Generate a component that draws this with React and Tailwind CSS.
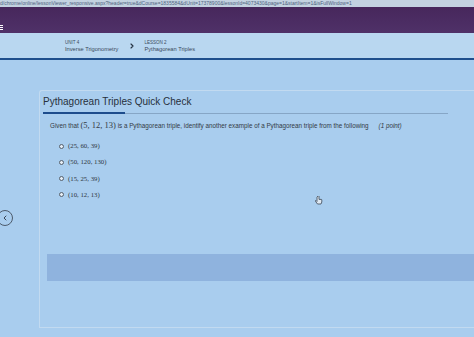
import { ChevronRight, ChevronLeft } from 'lucide-react';

const options = ['(25, 60, 39)', '(50, 120, 130)', '(15, 25, 39)', '(10, 12, 13)'];

function App() {
  return (
    <div className="relative h-[337px] w-[474px] overflow-hidden bg-[#a9cdee] font-['Liberation_Sans',Arial,sans-serif]">
      {/* address bar */}
      <div className="h-[7px] overflow-hidden whitespace-nowrap bg-[#c3d2e0] pl-0 text-[5px] leading-[6px] text-[#4f6480]">
        d/chrome/online/lessonViewer_responsive.aspx?header=true&amp;dCourse=1835584&amp;dUnit=17378900&amp;lessonId=4073430&amp;page=1&amp;startItem=1&amp;isFullWindow=1
      </div>

      {/* purple header */}
      <div className="flex h-[26px] items-end bg-gradient-to-b from-[#47275c] to-[#4f3168] pb-[3px]">
        <div className="flex w-[3px] flex-col gap-[1px]">
          <span className="h-[1px] bg-white" />
          <span className="h-[1px] bg-white" />
          <span className="h-[1px] bg-white" />
        </div>
      </div>

      {/* breadcrumb */}
      <div className="flex h-[25px] items-center bg-[#b9d7f0] pl-[65px] text-[#3a4a5c]">
        <div className="flex flex-col leading-[7px]">
          <span className="text-[4.5px] uppercase">Unit 4</span>
          <span className="text-[5.7px]">Inverse Trigonometry</span>
        </div>
        <ChevronRight className="ml-[10px] mr-[8px] h-[8px] w-[8px] text-[#263444]" strokeWidth={3.5} />
        <div className="flex flex-col leading-[7px]">
          <span className="text-[4.5px] uppercase">Lesson 2</span>
          <span className="text-[5.7px]">Pythagorean Triples</span>
        </div>
      </div>
      <div className="h-[2px] bg-[#1f4f8c]" />

      {/* body */}
      <div className="flex">
        <div className="w-[39px] shrink-0 pt-[150px]">
          <div className="-ml-[3px] flex h-[16px] w-[16px] items-center justify-center rounded-full border border-[#4d5b6c]">
            <ChevronLeft className="h-[8px] w-[8px] text-[#3a4656]" strokeWidth={3} />
          </div>
        </div>

        <div className="mt-[30px] h-[238px] flex-1 rounded-tl-[3px] border-l border-t border-b border-[#c2daf0]">
          <div className="pl-[3px] pr-[26px] pt-[4px]">
            <h1 className="text-[10px] leading-[13px] text-[#27303c]">Pythagorean Triples Quick Check</h1>
            <div className="mt-[4px] flex items-end">
              <span className="h-[2px] w-[82px] bg-[#1d4c8c]" />
              <span className="h-[1px] flex-1 bg-[#86a6c6]" />
            </div>
          </div>

          <p className="mt-[6px] whitespace-nowrap pl-[10px] text-[6.3px] leading-[10px] text-[#333a44]">
            Given that{' '}
            <span className="font-['Liberation_Serif',serif] text-[8.5px]">(5, 12, 13)</span>{' '}
            is a Pythagorean triple, identify another example of a Pythagorean triple from the following
            <span className="ml-[10px] italic">(1 point)</span>
          </p>

          <div className="mt-[10px] flex flex-col gap-[6.3px] pl-[19px]">
            {options.map((o) => (
              <div key={o} className="flex h-[10px] items-center gap-[4px]">
                <span className="h-[5px] w-[5px] rounded-full border border-[#55606c] bg-[#e6eef6]" />
                <span className="font-['Liberation_Serif',serif] text-[6.8px] text-[#2e3640]">{o}</span>
              </div>
            ))}
          </div>

          <div className="ml-[7px] mt-[54px] h-[27px] bg-[#8fb3de]" />
        </div>
      </div>

      {/* mouse cursor */}
      <svg className="absolute left-[315px] top-[196px]" width="8" height="9" viewBox="0 0 8 9">
        <path d="M2 1 v4.5 l-1 -1 q-0.8 0 -0.5 0.8 l2 2.7 h3.5 l0.8 -2 v-2 q0 -0.7 -0.7 -0.6 l-2.1 0 v-3.4 q-0.5 -0.6 -1 0 z" fill="#dfe9f3" stroke="#3c4654" strokeWidth="0.8" />
      </svg>
    </div>
  );
}

export default App;
